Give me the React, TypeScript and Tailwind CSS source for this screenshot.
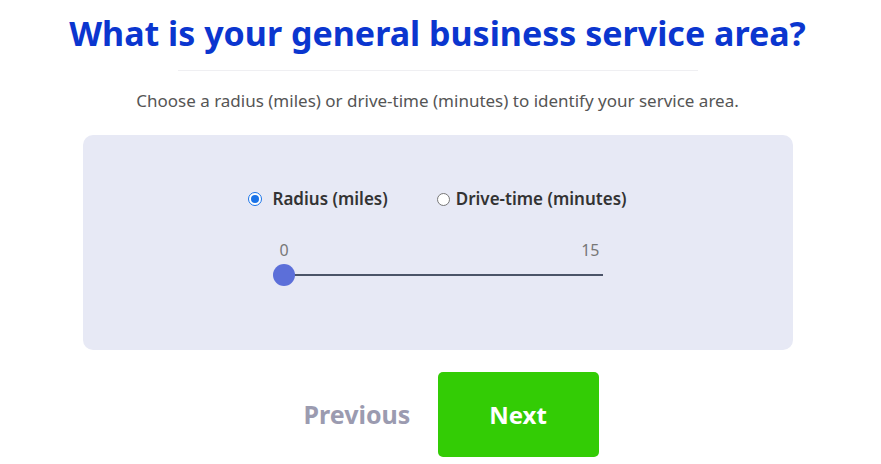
import React, { useState } from "react";

export default function App() {
  const [mode, setMode] = useState<"radius" | "drive">("radius");
  const font = { fontFamily: '"Noto Sans", "Open Sans", sans-serif' };
  return (
    <div className="w-[875px] h-[464px] bg-white flex flex-col items-center overflow-hidden" style={font}>
      <h1 className="h-[66px] flex items-center justify-center whitespace-nowrap text-[34px] font-bold text-[#0b36cf]">
        What is your general business service area?
      </h1>
      <div className="mt-[4px] w-[520px] h-px bg-[#efeff2]" />
      <p className="mt-[15px] h-[30px] leading-[30px] text-[17px] text-[#555] whitespace-nowrap">
        Choose a radius (miles) or drive-time (minutes) to identify your service area.
      </p>
      <div className="mt-[19px] w-[710px] h-[215px] rounded-[10px] bg-[#e7e9f5] flex flex-col items-center">
        <div className="mt-[52px] h-[24px] flex items-center">
          <label className="flex items-center cursor-pointer" onClick={() => setMode("radius")}>
            <span className="w-[14px] h-[14px] rounded-full flex items-center justify-center bg-white border-[1.5px] border-[#1a73e8]">
              {mode === "radius" && <span className="w-[8px] h-[8px] rounded-full bg-[#1a73e8]" />}
            </span>
            <span className="ml-[10px] text-[17px] font-semibold text-[#333]">Radius (miles)</span>
          </label>
          <label className="ml-[49px] flex items-center cursor-pointer" onClick={() => setMode("drive")}>
            <span className="w-[13px] h-[13px] rounded-full flex items-center justify-center bg-white border border-[#777]">
              {mode === "drive" && <span className="w-[8px] h-[8px] rounded-full bg-[#1a73e8]" />}
            </span>
            <span className="ml-[6px] text-[17px] font-semibold text-[#333]">Drive-time (minutes)</span>
          </label>
        </div>
        <div className="mt-[27px] w-[330px]">
          <div className="h-[24px] flex items-center justify-between pl-[7px] pr-[3px] text-[16px] text-[#777]">
            <span>0</span>
            <span>15</span>
          </div>
          <div className="relative mt-[2px] h-[22px] flex items-center">
            <div className="ml-[11px] flex-1 h-[2px] bg-[#4b5468]" />
            <div className="absolute left-0 top-0 w-[22px] h-[22px] rounded-full bg-[#5c6fd9]" />
          </div>
        </div>
      </div>
      <div className="mt-[22px] flex">
        <button className="w-[161px] h-[85px] text-[25px] font-bold text-[#9b9bb0] bg-transparent">Previous</button>
        <button className="w-[161px] h-[85px] rounded-[5px] bg-[#33cc05] text-[24px] font-bold text-white">Next</button>
      </div>
    </div>
  );
}
